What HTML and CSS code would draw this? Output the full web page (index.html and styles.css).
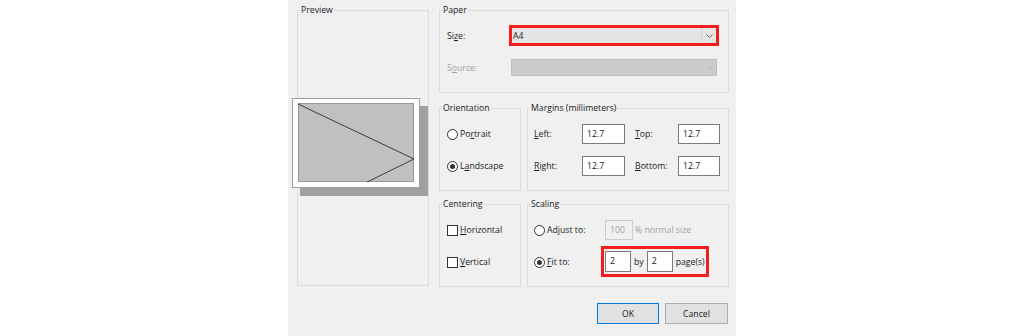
FILE: index.html
```html
<!DOCTYPE html>
<html>
<head>
<meta charset="utf-8">
<title>Page Setup</title>
<link rel="stylesheet" href="styles.css">
</head>
<body>
<div class="dialog">
  <fieldset class="group preview">
    <legend>Preview</legend>
    <svg class="page" width="137" height="99" viewBox="0 0 137 99">
      <rect x="8" y="8" width="128" height="90" fill="#a0a0a0"/>
      <rect x="0.5" y="0.5" width="127" height="89" fill="#fff" stroke="#a0a0a0"/>
      <rect x="6.5" y="5.5" width="115" height="78" fill="#c0c0c0" stroke="#505050" stroke-dasharray="1 1"/>
      <polyline points="6,6 122,61 75,84" fill="none" stroke="#3c3c3c"/>
    </svg>
  </fieldset>

  <div class="right">
    <fieldset class="group paper">
      <legend>Paper</legend>
      <div class="body">
        <div class="row r17">
          <span class="lbl w64">Si<u>z</u>e:</span>
          <div class="combo hl">
            <span class="combo-text">A4</span>
            <span class="combo-arrow"><svg width="7" height="4" viewBox="0 0 7 4"><polyline points="0.5,0.5 3.5,3.5 6.5,0.5" fill="none" stroke="#606060"/></svg></span>
          </div>
        </div>
        <div class="row r17">
          <span class="lbl w64 dis">S<u>o</u>urce:</span>
          <div class="combo off">
            <span class="combo-text"></span>
            <span class="combo-arrow"><svg width="7" height="4" viewBox="0 0 7 4"><polyline points="0.5,0.5 3.5,3.5 6.5,0.5" fill="none" stroke="#b4b4b4"/></svg></span>
          </div>
        </div>
      </div>
    </fieldset>

    <div class="pair">
      <fieldset class="group narrow">
        <legend>Orientation</legend>
        <div class="body pl7">
          <div class="row r20"><span class="radio"></span><span>Po<u>r</u>trait</span></div>
          <div class="row r20"><span class="radio on"></span><span>L<u>a</u>ndscape</span></div>
        </div>
      </fieldset>
      <fieldset class="group wide">
        <legend>Margins (millimeters)</legend>
        <div class="body pl6">
          <div class="row r20">
            <span class="lbl w48"><u>L</u>eft:</span>
            <input class="field w43" type="text" value="12.7">
            <span class="lbl w43 ml10"><u>T</u>op:</span>
            <input class="field w42" type="text" value="12.7">
          </div>
          <div class="row r20">
            <span class="lbl w48"><u>R</u>ight:</span>
            <input class="field w43" type="text" value="12.7">
            <span class="lbl w43 ml10"><u>B</u>ottom:</span>
            <input class="field w42" type="text" value="12.7">
          </div>
        </div>
      </fieldset>
    </div>

    <div class="pair">
      <fieldset class="group narrow">
        <legend>Centering</legend>
        <div class="body pl7">
          <div class="row r20"><span class="check"></span><span><u>H</u>orizontal</span></div>
          <div class="row r20"><span class="check"></span><span><u>V</u>ertical</span></div>
        </div>
      </fieldset>
      <fieldset class="group wide">
        <legend>Scaling</legend>
        <div class="body pl6">
          <div class="row r20">
            <span class="opt w71"><span class="radio"></span><span>Ad<u>j</u>ust to:</span></span>
            <input class="field off w28" type="text" value="100" disabled>
            <span class="dis ml1">% normal size</span>
          </div>
          <div class="row r20">
            <span class="opt w67"><span class="radio on"></span><span><u>F</u>it to:</span></span>
            <span class="mark">
              <input class="field w26 h21" type="text" value="2">
              <span class="by">by</span>
              <input class="field w26 h21" type="text" value="2">
              <span class="pages">page(s)</span>
            </span>
          </div>
        </div>
      </fieldset>
    </div>

    <div class="buttons">
      <button class="btn ok" type="button">OK</button>
      <button class="btn cancel" type="button">Cancel</button>
    </div>
  </div>
</div>
</body>
</html>
```

FILE: styles.css
```css
* { box-sizing: border-box; }

html, body {
  margin: 0;
  background: #ffffff;
}

body {
  font-family: "Segoe UI", "Open Sans", "Noto Sans", sans-serif;
  font-size: 8.7px;
  line-height: 14px;
  color: #1a1a1a;
  display: flex;
  justify-content: center;
}

.dialog {
  width: 448px;
  height: 336px;
  background: #f0f0f0;
  display: flex;
  align-items: flex-start;
  gap: 10px;
  padding: 3px 7px 0 9px;
}

.group {
  margin: 0;
  padding: 0;
  border: 1px solid #dcdcdc;
  min-width: 0;
}

.group legend {
  margin-left: 2px;
  padding: 0 1px;
  line-height: 14px;
}

.preview {
  width: 132px;
  height: 283px;
}

.page {
  display: block;
  margin: 81px 0 0 -6px;
}

.right {
  width: 290px;
  display: flex;
  flex-direction: column;
}

.paper .body {
  padding: 10px 10px 16px 7px;
  display: flex;
  flex-direction: column;
  gap: 15px;
}

.pair {
  display: flex;
  gap: 6px;
  margin-top: 8px;
}

.pair + .pair {
  margin-top: 6px;
}

.narrow { width: 82px; }
.wide { width: 202px; }

.pair .body {
  padding-top: 9px;
  padding-bottom: 14px;
  display: flex;
  flex-direction: column;
  gap: 12px;
}

.pl7 { padding-left: 7px; }
.pl6 { padding-left: 6px; }

.row {
  display: flex;
  align-items: center;
}

.r17 { height: 17px; }
.r20 { height: 20px; }

.lbl { flex: none; }
.w64 { width: 64px; }
.w48 { width: 48px; }
.w43 { width: 43px; }
.w42 { width: 42px; }
.w28 { width: 28px; }
.w26 { width: 26px; }
.w71 { width: 71px; }
.w67 { width: 67px; }
.ml10 { margin-left: 10px; }
.ml1 { margin-left: 2px; }

.dis { color: #a0a0a0; }

u { text-decoration: underline; text-underline-offset: 1px; }

/* combo boxes */
.combo {
  width: 206px;
  height: 17px;
  border: 1px solid #adadad;
  background: #e5e5e5;
  display: flex;
  align-items: center;
}

.combo-text {
  flex: 1;
  padding-left: 1px;
}

.combo-arrow {
  width: 15px;
  height: 100%;
  display: flex;
  align-items: center;
  justify-content: center;
  border-left: 1px solid #d2d2d2;
}

.combo-arrow svg { display: block; }

.combo.hl {
  outline: 3px solid #f21d1d;
  outline-offset: -1px;
}

.combo.off {
  background: #cccccc;
  border-color: #bfbfbf;
}

.combo.off .combo-arrow { border-left-color: transparent; }

/* radio & check */
.radio, .check {
  flex: none;
  width: 11px;
  height: 11px;
  border: 1px solid #333333;
  background: #ffffff;
  margin-right: 2px;
  position: relative;
}

.radio { border-radius: 50%; }

.radio.on::after {
  content: "";
  position: absolute;
  left: 2px;
  top: 2px;
  width: 5px;
  height: 5px;
  border-radius: 50%;
  background: #333333;
}

.opt {
  display: flex;
  align-items: center;
  flex: none;
}

/* text fields */
.field {
  flex: none;
  height: 20px;
  margin: 0;
  padding: 0 0 1px 4px;
  border: 1px solid #7a7a7a;
  background: #ffffff;
  font: inherit;
  color: #1a1a1a;
  outline: none;
}

.h21 { height: 21px; }

.field.off {
  border-color: #cccccc;
  background: #f0f0f0;
  color: #a0a0a0;
}

.mark {
  display: flex;
  align-items: center;
  border: 3px solid #f21d1d;
  padding: 2px 1px 2px 1px;
  margin: -6px 0 -5px 0;
}

.by { margin: 0 3px; }
.pages { margin-left: 3px; }

/* buttons */
.buttons {
  display: flex;
  justify-content: flex-end;
  gap: 6px;
  margin-top: 16px;
  padding-right: 1px;
}

.btn {
  height: 21px;
  margin: 0;
  padding: 0;
  font: inherit;
  color: #1a1a1a;
  background: #e1e1e1;
  border: 1px solid #adadad;
}

.ok { width: 62px; border-color: #0078d7; }
.cancel { width: 63px; }
```
